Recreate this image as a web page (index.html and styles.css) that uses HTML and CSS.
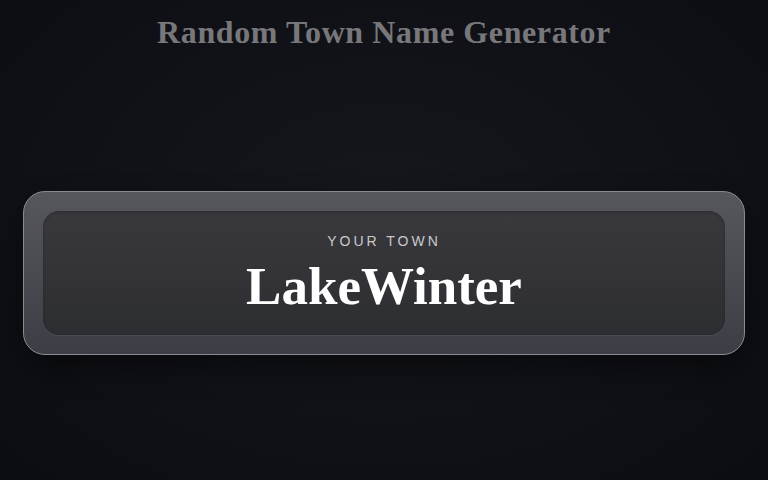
FILE: index.html
```html
<!DOCTYPE html>
<html lang="en">
<head>
  <meta charset="UTF-8">
  <meta name="viewport" content="width=device-width, initial-scale=1.0">
  <title>Random Town Name Generator</title>
  <link rel="stylesheet" href="styles.css">
</head>
<body>
  <h1 class="title">Random Town Name Generator</h1>

  <main class="stage">
    <div class="card">
      <div class="card-inner">
        <div class="label">Your Town</div>
        <div id="town" class="town">LakeWinter</div>
      </div>
    </div>
  </main>
</body>
</html>
```

FILE: styles.css
```css
/* Page */
html, body {
  height: 100%;
}

body {
  margin: 0;
  display: flex;
  flex-direction: column;
  font-family: 'Liberation Serif', serif;
  background: radial-gradient(ellipse at 50% 45%, #16171d 0%, #101117 60%, #0c0d12 100%);
  color: #fff;
  overflow: hidden;
}

.title {
  margin: 0;
  height: 65px;
  padding-top: 14px;
  box-sizing: border-box;
  text-align: center;
  font-size: 32px;
  font-weight: bold;
  letter-spacing: 0.6px;
  color: #78787b;
}

.stage {
  flex: 1;
  display: flex;
  align-items: center;
  justify-content: center;
  padding: 0 23px;
}

/* Result card */
.card {
  width: 100%;
  padding: 19px;
  border: 1px solid #8a8b90;
  border-radius: 22px;
  background: linear-gradient(to bottom, #56575c, #3c3e46);
  box-shadow: 0 14px 30px rgba(0, 0, 0, 0.45);
}

.card-inner {
  padding: 22px 16px 17px;
  border-radius: 16px;
  background: linear-gradient(to bottom, #38383d, #2d2e32);
  box-shadow: 0 1px 0 rgba(255, 255, 255, 0.06), inset 0 1px 3px rgba(0, 0, 0, 0.25);
  text-align: center;
}

.label {
  font-family: 'Liberation Sans', sans-serif;
  font-size: 14px;
  line-height: 16px;
  letter-spacing: 3px;
  text-transform: uppercase;
  color: #c9c9cc;
}

.town {
  margin-top: 5px;
  font-size: 53px;
  font-weight: bold;
  line-height: 64px;
  color: #fff;
}
```
